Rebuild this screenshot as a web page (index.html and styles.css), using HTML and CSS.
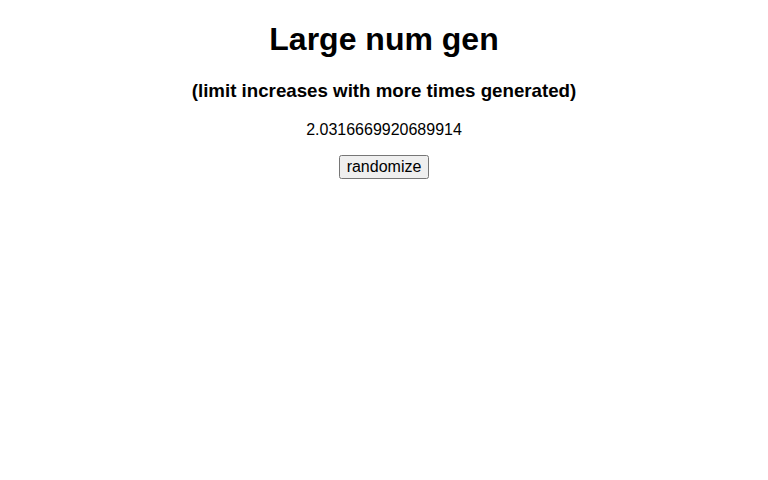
FILE: index.html
```html
<!DOCTYPE html>
<html lang="en">

<head>
    <meta charset="UTF-8">
    <meta name="viewport" content="width=device-width, initial-scale=1.0">
    <title>Large num gen</title>
    <link rel="stylesheet" href="styles.css">
</head>

<body>
    <h1>Large num gen</h1>
    <h3>(limit increases with more times generated)</h3>
    <p id="number">2.0316669920689914</p>
    <button id="randomize-btn" class="randomize-btn">randomize</button>
</body>

</html>
```

FILE: styles.css
```css
body {
    font-family: "Liberation Sans", Arial, sans-serif;
    text-align: center;
    color: #000000;
    margin: 0 8px;
}

.randomize-btn {
    font-family: "Liberation Sans", Arial, sans-serif;
    font-size: 16px;
}
```
